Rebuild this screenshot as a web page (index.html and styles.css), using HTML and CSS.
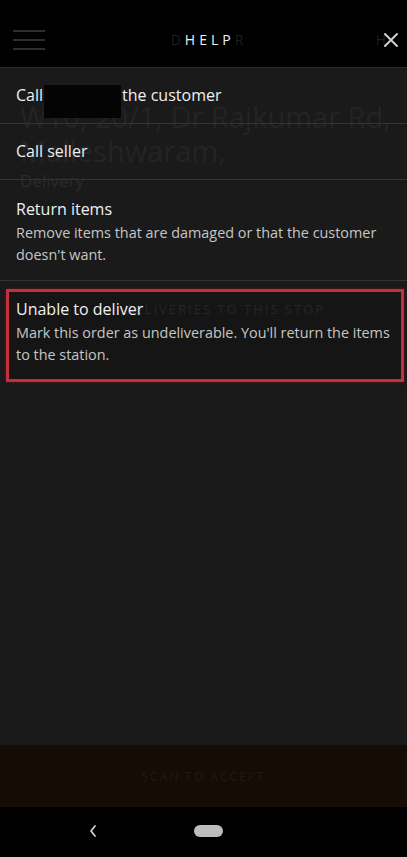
FILE: index.html
```html
<!DOCTYPE html>
<html lang="en">
<head>
<meta charset="utf-8">
<title>Help</title>
<link rel="stylesheet" href="styles.css">
</head>
<body>
<div class="screen">
  <header class="topbar">
    <div class="burger"><span></span><span></span><span></span></div>
    <div class="title"><span class="ghost-l">D</span>HELP<span class="ghost-r">R</span></div>
    <div class="close"><span class="ghost-h">H</span>
      <svg width="16" height="16" viewBox="0 0 16 16"><path d="M2 2 L14 14 M14 2 L2 14" stroke="#cfcfcf" stroke-width="2" stroke-linecap="round"/></svg>
    </div>
  </header>

  <main class="sheet">
    <div class="under">
      <div class="u-addr">W10, 20/1, Dr Rajkumar Rd,</div>
      <div class="u-addr">Malleshwaram,</div>
      <div class="u-type">Delivery</div>
      <div class="u-section">DELIVERIES TO THIS STOP</div>
    </div>

    <div class="item short">
      <div class="item-title">Call<span class="redact"></span>the customer</div>
    </div>
    <div class="item short">
      <div class="item-title">Call seller</div>
    </div>
    <div class="item">
      <div class="item-title">Return items</div>
      <div class="item-desc">Remove items that are damaged or that the customer doesn't want.</div>
    </div>
    <div class="item selected">
      <div class="item-title">Unable to deliver</div>
      <div class="item-desc">Mark this order as undeliverable. You'll return the items to the station.</div>
    </div>
  </main>

  <div class="footer"><span>SCAN TO ACCEPT</span></div>

  <nav class="navbar">
    <svg width="10" height="14" viewBox="0 0 10 14"><path d="M7 2 L3 7 L7 12" stroke="#d0d0d0" stroke-width="1.8" fill="none" stroke-linecap="round" stroke-linejoin="round"/></svg>
    <div class="pill"></div>
  </nav>
</div>
</body>
</html>
```

FILE: styles.css
```css
* { box-sizing: border-box; }
html, body { margin: 0; padding: 0; background: #000; }
body { font-family: "Open Sans", "Noto Sans", sans-serif; }

.screen {
  width: 407px;
  height: 857px;
  display: flex;
  flex-direction: column;
  overflow: hidden;
}

.topbar {
  height: 68px;
  background: #000;
  display: grid;
  grid-template-columns: 1fr auto 1fr;
  align-items: center;
  padding: 12px 8px 0 13px;
  border-bottom: 1px solid #2a2a2a;
}
.burger { display: flex; flex-direction: column; gap: 7px; width: 32px; }
.burger span { display: block; height: 2px; background: #2e2e2e; }
.title {
  font-size: 14px;
  letter-spacing: 4px;
  color: #f2f2f2;
  padding-left: 6px;
}
.ghost-l, .ghost-r { color: #1e1e1e; }
.close { display: flex; align-items: center; justify-content: flex-end; }
.ghost-h { color: #1c1c1c; font-size: 14px; margin-right: -3px; }
.close svg { display: block; }

.sheet {
  flex: 1;
  background: #1a1a1a;
  position: relative;
  display: flex;
  flex-direction: column;
}

.under {
  position: absolute;
  left: 20px;
  top: 32px;
  color: #242424;
  pointer-events: none;
  z-index: 0;
}
.u-addr { font-size: 29px; line-height: 34px; }
.u-type { font-size: 17px; margin-top: 1px; color: #2a2a2a; }
.u-section { font-size: 13px; letter-spacing: 2px; margin-top: 108px; margin-left: 104px; color: #2f2f2f; }

.item {
  position: relative;
  z-index: 1;
  padding: 18px 16px 14px;
  border-bottom: 1px solid #333;
}
.item.short { height: 56px; padding-top: 16px; }
.item-title {
  font-size: 16px;
  line-height: 22px;
  color: #f0f0f0;
}
.redact {
  display: inline-block;
  width: 77px;
  height: 33px;
  background: #040404;
  vertical-align: -7px;
  margin: -10px 1px -10px 1px;
}
.item-desc {
  font-size: 14.4px;
  line-height: 22px;
  color: #c6c6c6;
  margin-top: 2px;
}
.item.selected {
  border: 3px solid #c3303c;
  box-shadow: 0 0 3px #5a1218;
  background: rgba(0, 0, 0, 0.18);
  margin: 8px 3px 0 6px;
  padding: 6px 8px 13px 7px;
}

.footer {
  height: 62px;
  background: #150c05;
  display: flex;
  align-items: center;
  justify-content: center;
  font-size: 12px;
  letter-spacing: 2px;
  color: #24190f;
}

.navbar {
  height: 50px;
  background: #000;
  display: flex;
  align-items: center;
  justify-content: center;
  gap: 96px;
  padding-right: 96px;
  padding-bottom: 2px;
}
.navbar svg { display: block; }
.pill { width: 29px; height: 12px; border-radius: 6px; background: #bdbdbd; }
```
